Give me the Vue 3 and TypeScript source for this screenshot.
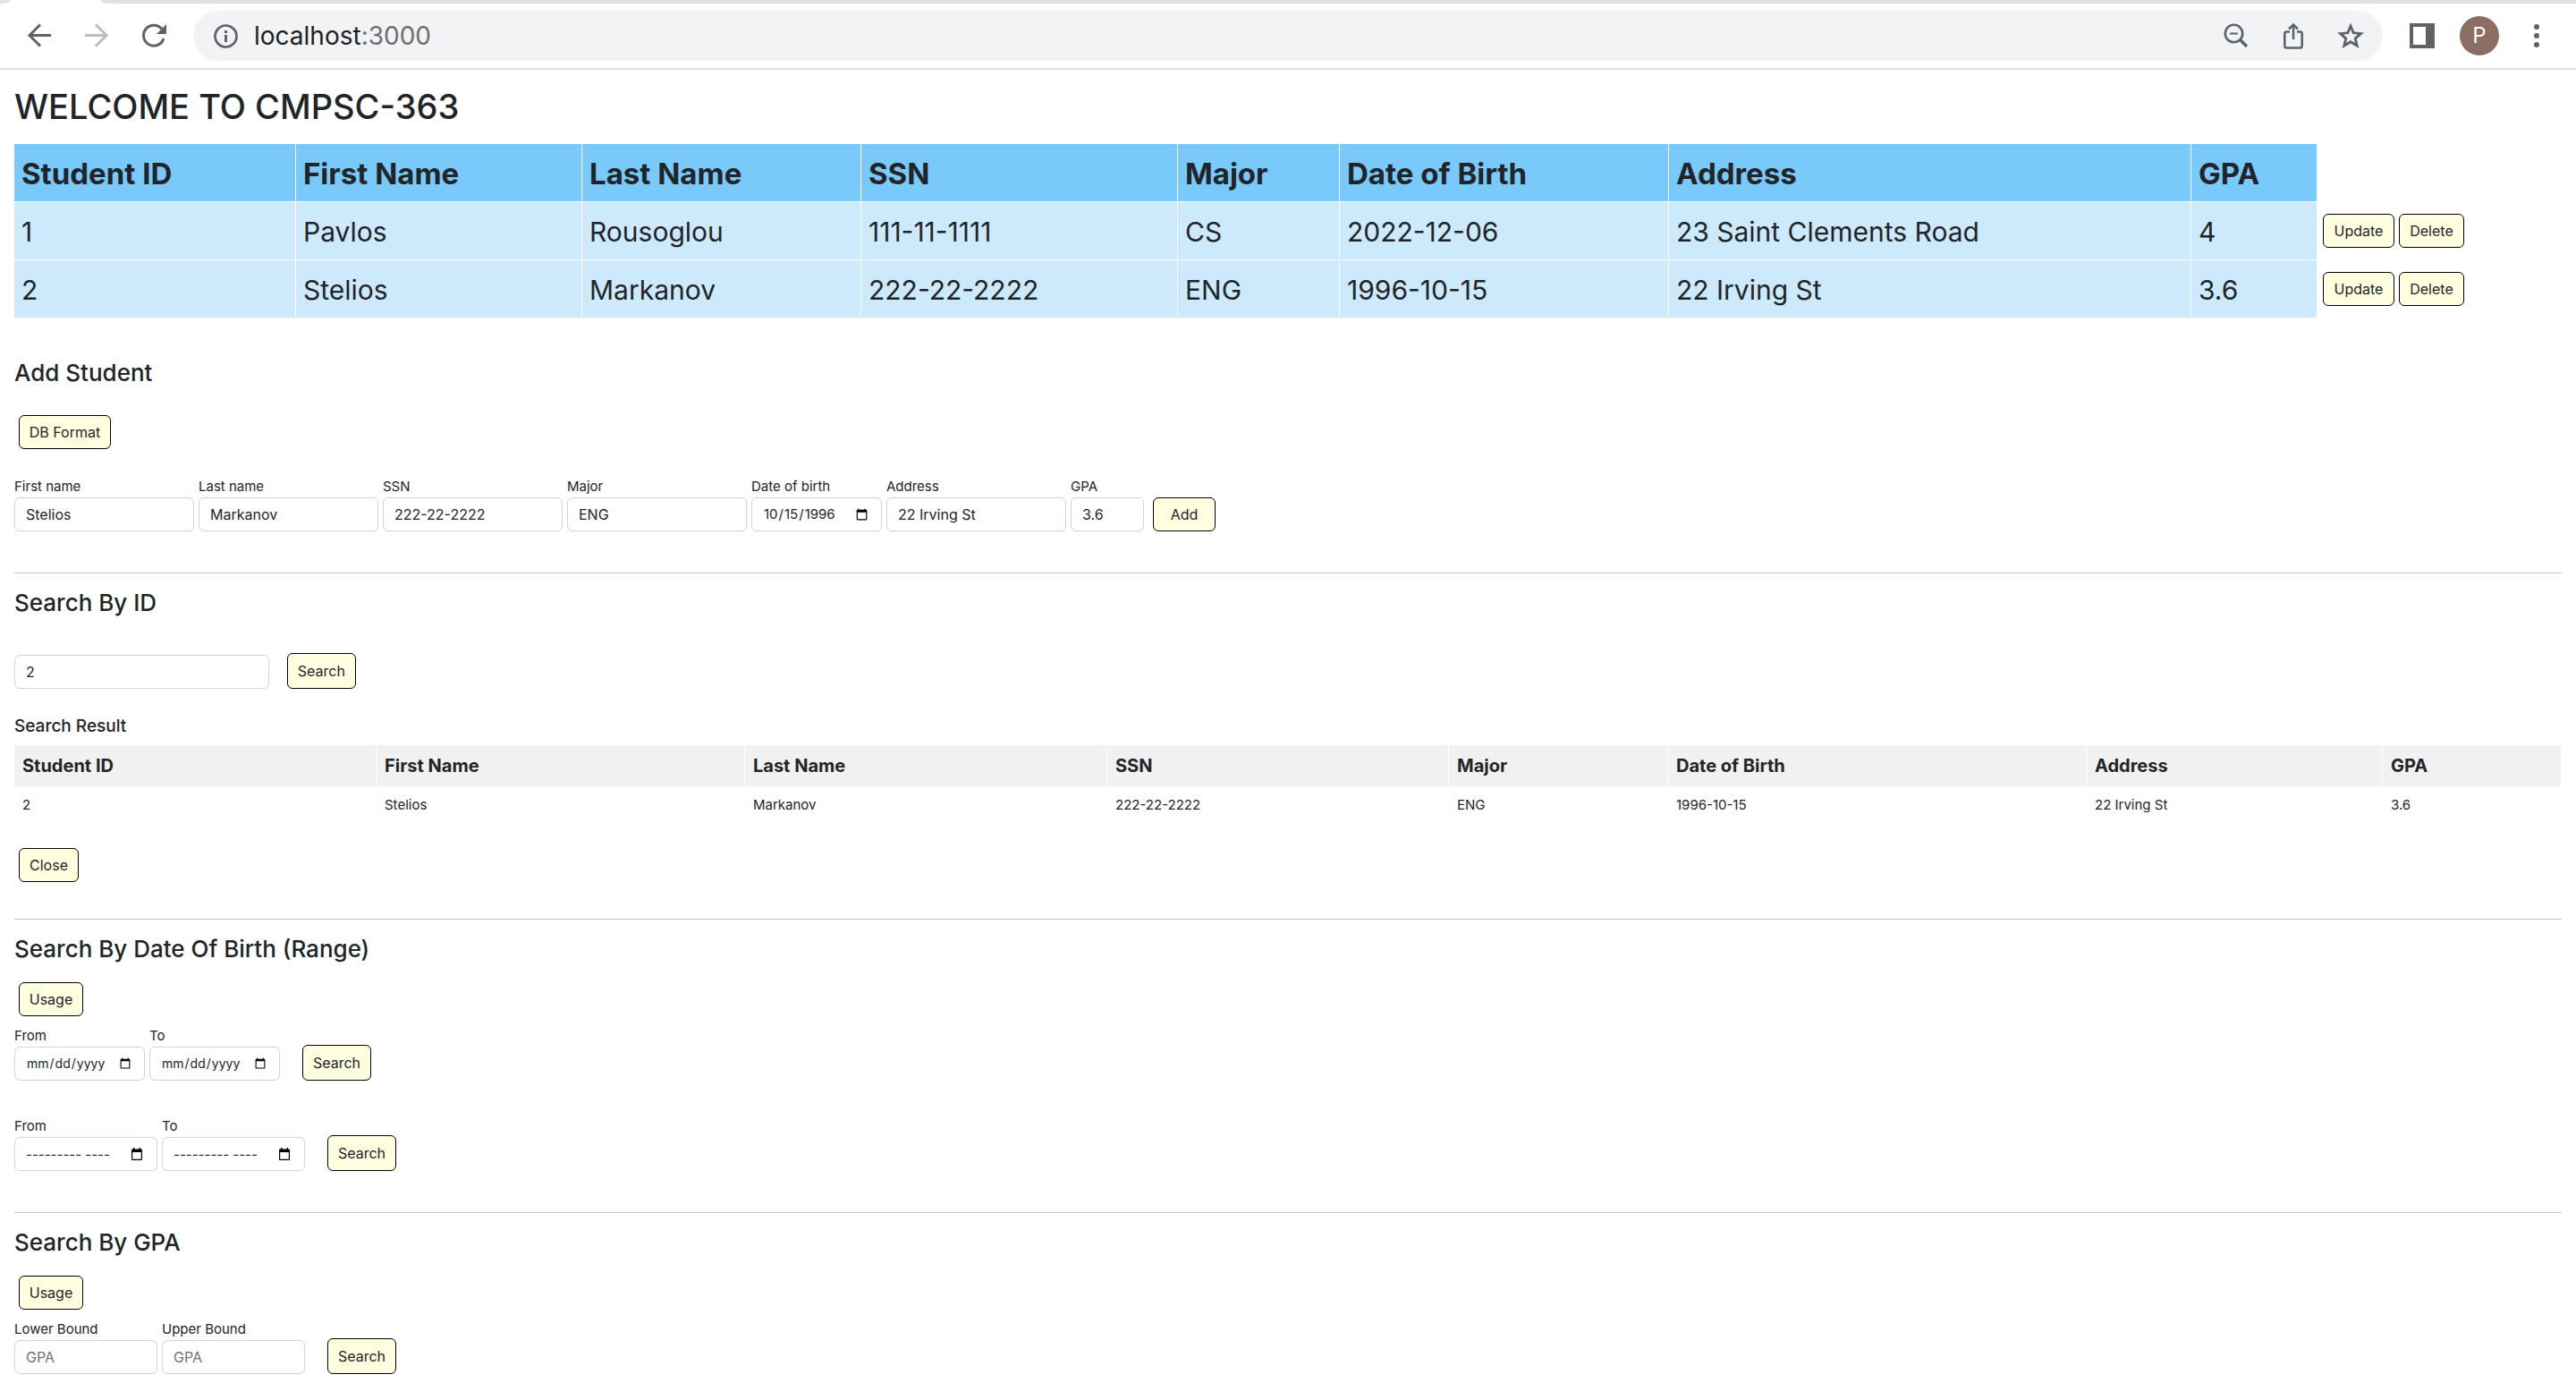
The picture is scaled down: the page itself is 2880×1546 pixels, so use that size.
<script setup lang="ts">
import { ref } from 'vue'

interface Student {
  id: number
  firstName: string
  lastName: string
  ssn: string
  major: string
  dob: string
  address: string
  gpa: number
}

interface Column {
  key: keyof Student
  title: string
  rosterShare: number
  resultShare: number
}

const columns: Column[] = [
  { key: 'id', title: 'Student ID', rosterShare: 315, resultShare: 405 },
  { key: 'firstName', title: 'First Name', rosterShare: 320, resultShare: 412 },
  { key: 'lastName', title: 'Last Name', rosterShare: 312, resultShare: 405 },
  { key: 'ssn', title: 'SSN', rosterShare: 354, resultShare: 382 },
  { key: 'major', title: 'Major', rosterShare: 181, resultShare: 245 },
  { key: 'dob', title: 'Date of Birth', rosterShare: 368, resultShare: 468 },
  { key: 'address', title: 'Address', rosterShare: 584, resultShare: 331 },
  { key: 'gpa', title: 'GPA', rosterShare: 141, resultShare: 200 },
]
const actionsShare = 273

const rosterTotal = columns.reduce((sum, c) => sum + c.rosterShare, actionsShare)
const resultTotal = columns.reduce((sum, c) => sum + c.resultShare, 0)
const percent = (share: number, total: number): string => `${(share / total) * 100}%`

const students = ref<Student[]>([
  { id: 1, firstName: 'Pavlos', lastName: 'Rousoglou', ssn: '111-11-1111', major: 'CS', dob: '2022-12-06', address: '23 Saint Clements Road', gpa: 4 },
  { id: 2, firstName: 'Stelios', lastName: 'Markanov', ssn: '222-22-2222', major: 'ENG', dob: '1996-10-15', address: '22 Irving St', gpa: 3.6 },
])

const form = ref({
  firstName: 'Stelios',
  lastName: 'Markanov',
  ssn: '222-22-2222',
  major: 'ENG',
  dob: '1996-10-15',
  address: '22 Irving St',
  gpa: '3.6',
})

const searchId = ref('2')
const result = ref<Student | null>(students.value[1])
const dobFrom = ref('')
const dobTo = ref('')
const months = ref([
  { id: 'month-from', label: 'From', value: '' },
  { id: 'month-to', label: 'To', value: '' },
])
const gpaLow = ref('')
const gpaHigh = ref('')

function addStudent(): void {
  const nextId = Math.max(0, ...students.value.map((s) => s.id)) + 1
  students.value.push({ id: nextId, ...form.value, gpa: Number(form.value.gpa) })
}

function removeStudent(id: number): void {
  students.value = students.value.filter((s) => s.id !== id)
}

function findById(): void {
  result.value = students.value.find((s) => s.id === Number(searchId.value)) ?? null
}
</script>

<template>
  <div class="window">
    <div class="tabstrip">
      <span class="strip-left"></span>
      <span class="strip-right"></span>
    </div>

    <header class="toolbar">
      <nav class="nav">
        <button class="icon-btn" type="button" aria-label="Back">
          <svg width="32" height="32" viewBox="0 0 32 32" fill="none" stroke="#5f6368" stroke-width="3">
            <path d="M29 15.500H5M17 3.500L5 15.500L17 27.500" />
          </svg>
        </button>
        <button class="icon-btn" type="button" aria-label="Forward">
          <svg width="32" height="32" viewBox="0 0 32 32" fill="none" stroke="#babcbe" stroke-width="3">
            <path d="M3 15.500H27M15 3.500L27 15.500L15 27.500" />
          </svg>
        </button>
        <button class="icon-btn" type="button" aria-label="Reload">
          <svg width="32" height="32" viewBox="0 0 32 32" fill="none">
            <path d="M27 19A11.500 11.500 0 1 1 25 8.500" stroke="#5f6368" stroke-width="3" />
            <path d="M30 3V14H19Z" fill="#5f6368" />
          </svg>
        </button>
      </nav>

      <div class="omnibox">
        <button class="icon-btn" type="button" aria-label="Site information">
          <svg width="32" height="32" viewBox="0 0 32 32" fill="none">
            <circle cx="16.500" cy="16.500" r="12" stroke="#5f6368" stroke-width="2.700" />
            <path d="M16.500 15V23M16.500 10V13" stroke="#5f6368" stroke-width="3" />
          </svg>
        </button>
        <span class="url">localhost<span class="port">:3000</span></span>
        <div class="omni-actions">
          <button class="icon-btn" type="button" aria-label="Zoom">
            <svg width="32" height="32" viewBox="0 0 32 32" fill="none" stroke="#5f6368">
              <circle cx="13.500" cy="13.500" r="9.700" stroke-width="2.600" />
              <path d="M9 13.500H18" stroke-width="2" />
              <path d="M20.500 20.500L28 28" stroke-width="3.600" />
            </svg>
          </button>
          <button class="icon-btn" type="button" aria-label="Share">
            <svg width="32" height="32" viewBox="0 0 32 32" fill="none" stroke="#5f6368" stroke-width="2.600">
              <path d="M12 11.500H8.500Q6.300 11.500 6.300 13.700V27.300Q6.300 29.500 8.500 29.500H23.500Q25.700 29.500 25.700 27.300V13.700Q25.700 11.500 23.500 11.500H20" />
              <path d="M16 20V4M11 8.500L16 3.500L21 8.500" />
            </svg>
          </button>
          <button class="icon-btn" type="button" aria-label="Bookmark">
            <svg width="32" height="32" viewBox="0 0 32 32" fill="#5f6368">
              <path fill-rule="evenodd" d="M16 1.500L20.200 11.500L31 12.400L22.800 19.500L25.300 30L16 24.400L6.700 30L9.200 19.500L1 12.400L11.800 11.500ZM16 8.800L13.800 14.100L8 14.600L12.400 18.400L11.100 24L16 21L20.900 24L19.600 18.400L24 14.600L18.200 14.100Z" />
            </svg>
          </button>
        </div>
      </div>

      <div class="chrome-actions">
        <button class="icon-btn" type="button" aria-label="Side panel">
          <svg width="28" height="28" viewBox="0 0 28 28">
            <path fill="#5f6368" fill-rule="evenodd" d="M0 0H28V28H0ZM4 4V24H18V4Z" />
          </svg>
        </button>
        <button class="avatar" type="button">P</button>
        <button class="icon-btn" type="button" aria-label="Menu">
          <svg width="28" height="28" viewBox="0 0 28 28" fill="#5f6368">
            <circle cx="14" cy="4" r="3" />
            <circle cx="14" cy="14" r="3" />
            <circle cx="14" cy="24" r="3" />
          </svg>
        </button>
      </div>
    </header>

    <main class="page">
      <h1>WELCOME TO CMPSC-363</h1>

      <table class="roster">
        <colgroup>
          <col v-for="c in columns" :key="c.key" :style="{ width: percent(c.rosterShare, rosterTotal) }" />
          <col :style="{ width: percent(actionsShare, rosterTotal) }" />
        </colgroup>
        <thead>
          <tr>
            <th v-for="c in columns" :key="c.key" scope="col">{{ c.title }}</th>
            <td class="actions"></td>
          </tr>
        </thead>
        <tbody>
          <tr v-for="s in students" :key="s.id">
            <td v-for="c in columns" :key="c.key">{{ s[c.key] }}</td>
            <td class="actions">
              <div class="action-row">
                <button class="btn update" type="button">Update</button>
                <button class="btn delete" type="button" @click="removeStudent(s.id)">Delete</button>
              </div>
            </td>
          </tr>
        </tbody>
      </table>

      <section class="add">
        <h2>Add Student</h2>
        <button class="btn inset format" type="button">DB Format</button>
        <form class="fields" @submit.prevent="addStudent">
          <div class="field text"><label for="first">First name</label><input id="first" v-model="form.firstName" type="text" /></div>
          <div class="field text"><label for="last">Last name</label><input id="last" v-model="form.lastName" type="text" /></div>
          <div class="field text"><label for="ssn">SSN</label><input id="ssn" v-model="form.ssn" type="text" /></div>
          <div class="field text"><label for="major">Major</label><input id="major" v-model="form.major" type="text" /></div>
          <div class="field date"><label for="dob">Date of birth</label><input id="dob" v-model="form.dob" type="date" /></div>
          <div class="field text"><label for="address">Address</label><input id="address" v-model="form.address" type="text" /></div>
          <div class="field grade"><label for="gpa">GPA</label><input id="gpa" v-model="form.gpa" type="text" /></div>
          <button class="btn submit" type="submit">Add</button>
        </form>
      </section>

      <hr />

      <section class="by-id">
        <h2>Search By ID</h2>
        <form class="fields" @submit.prevent="findById">
          <div class="field id"><input v-model="searchId" type="text" aria-label="Student ID" /></div>
          <button class="btn search near" type="submit">Search</button>
        </form>
        <template v-if="result">
          <h3>Search Result</h3>
          <table class="result">
            <colgroup>
              <col v-for="c in columns" :key="c.key" :style="{ width: percent(c.resultShare, resultTotal) }" />
            </colgroup>
            <thead>
              <tr>
                <th v-for="c in columns" :key="c.key" scope="col">{{ c.title }}</th>
              </tr>
            </thead>
            <tbody>
              <tr>
                <td v-for="c in columns" :key="c.key">{{ result[c.key] }}</td>
              </tr>
            </tbody>
          </table>
          <button class="btn inset close" type="button" @click="result = null">Close</button>
        </template>
      </section>

      <hr />

      <section class="range">
        <h2>Search By Date Of Birth (Range)</h2>
        <button class="btn inset usage" type="button">Usage</button>
        <form class="fields" @submit.prevent>
          <div class="field date"><label for="dob-from">From</label><input id="dob-from" v-model="dobFrom" type="date" /></div>
          <div class="field date"><label for="dob-to">To</label><input id="dob-to" v-model="dobTo" type="date" /></div>
          <button class="btn search" type="submit">Search</button>
        </form>
        <form class="fields months" @submit.prevent>
          <div v-for="m in months" :key="m.id" class="field wide month">
            <label :for="m.id">{{ m.label }}</label>
            <input :id="m.id" v-model="m.value" type="text" placeholder="--------- ----" />
            <button class="icon-btn picker" type="button" aria-label="Pick a month">
              <svg width="12" height="14" viewBox="0 0 12 14">
                <path fill="#000" fill-rule="evenodd" d="M2 0H3.500V1.500H8.500V0H10V1.500H11Q12 1.500 12 2.500V13Q12 14 11 14H1Q0 14 0 13V2.500Q0 1.500 1 1.500H2ZM1.200 5V12.800H10.800V5Z" />
              </svg>
            </button>
          </div>
          <button class="btn search" type="submit">Search</button>
        </form>
      </section>

      <hr />

      <section class="range">
        <h2>Search By GPA</h2>
        <button class="btn inset usage" type="button">Usage</button>
        <form class="fields" @submit.prevent>
          <div class="field wide"><label for="gpa-low">Lower Bound</label><input id="gpa-low" v-model="gpaLow" type="text" placeholder="GPA" /></div>
          <div class="field wide"><label for="gpa-high">Upper Bound</label><input id="gpa-high" v-model="gpaHigh" type="text" placeholder="GPA" /></div>
          <button class="btn search" type="submit">Search</button>
        </form>
      </section>
    </main>
  </div>
</template>

<style>
body {
  margin: 0;
  background: #fff;
}
</style>

<style scoped>
.window {
  font-family: Inter, "Liberation Sans", sans-serif;
  font-size: 16px;
  line-height: 24px;
  color: #212529;
  background: #fff;
}

.window *,
.window *::before,
.window *::after {
  box-sizing: border-box;
}

button,
input {
  font: inherit;
  color: inherit;
}

/* Browser chrome */
.tabstrip {
  display: flex;
  gap: 100px;
  height: 4px;
}

.strip-left {
  width: 12px;
  background: #dee1e6;
  border-bottom-right-radius: 12px 4px;
}

.strip-right {
  flex: 1;
  background: #dee1e6;
  border-bottom-left-radius: 12px 4px;
}

.toolbar {
  display: flex;
  align-items: center;
  height: 74px;
  padding: 0 30px 0 28px;
  border-bottom: 2px solid #dadce0;
}

.nav {
  display: flex;
  gap: 32px;
}

.icon-btn {
  display: flex;
  padding: 0;
  border: 0;
  background: none;
}

.omnibox {
  flex: 1;
  display: flex;
  align-items: center;
  height: 56px;
  margin: 0 30px 0 28px;
  padding: 0 20px;
  border-radius: 28px;
  background: #f1f3f4;
}

.url {
  flex: 1;
  margin-left: 16px;
  font-size: 28px;
  line-height: 32px;
  color: #202124;
}

.port {
  color: #6b6e72;
}

.omni-actions {
  display: flex;
  gap: 32px;
}

.chrome-actions {
  display: flex;
  align-items: center;
  gap: 28px;
}

.avatar {
  width: 44px;
  height: 44px;
  padding: 0;
  border: 0;
  border-radius: 50%;
  background: #8d6e63;
  color: #fff;
  font-size: 24px;
}

/* Page */
.page {
  padding: 17px 16px 10px;
}

h1,
h2,
h3 {
  margin: 0;
  font-weight: 500;
}

h1 {
  margin-bottom: 18px;
  font-size: 38px;
  line-height: 48px;
}

h2 {
  font-size: 26px;
  line-height: 34px;
}

h3 {
  margin: 30px 0 9px;
  font-size: 19px;
  line-height: 24px;
}

hr {
  height: 1px;
  margin: 46px 0 16px;
  border: 0;
  background: #c8c9ca;
}

table {
  width: 100%;
  table-layout: fixed;
  border-collapse: separate;
  border-spacing: 0;
  text-align: left;
}

th,
td {
  padding: 8px;
  border-right: 1px solid #fff;
  white-space: nowrap;
}

.roster th,
.roster td {
  height: 65px;
  padding: 9px 8px 7px;
  border-bottom: 1px solid #fff;
  font-size: 30px;
  line-height: 48px;
}

.roster th {
  background: #79c9fa;
  font-size: 33px;
}

.roster td {
  background: #cdeafc;
}

.roster .actions {
  padding: 0 6px;
  border: 0;
  background: none;
}

.action-row {
  display: flex;
  gap: 5px;
  font-size: 16px;
  line-height: 24px;
  padding-bottom: 2px;
}

.result th,
.result td {
  padding-left: 9px;
}

.result th {
  height: 47px;
  background: #f1f1f1;
  border-bottom: 1px solid #fff;
  font-size: 20px;
  line-height: 24px;
}

.result td {
  height: 40px;
  font-size: 15px;
  line-height: 24px;
}

.btn {
  height: 38px;
  padding: 0;
  border: 1px solid #000;
  border-radius: 6px;
  background: #ffffe0;
  font-size: 16px;
  line-height: 24px;
}

.inset {
  display: block;
  margin-left: 5px;
}

.update {
  width: 80px;
}

.delete {
  width: 73px;
}

.format {
  width: 103px;
}

.usage {
  width: 72px;
}

.close {
  width: 67px;
  margin-top: 28px;
}

.submit {
  width: 70px;
  margin-left: 5px;
}

.search {
  width: 77px;
  height: 40px;
  margin-left: 20px;
}

.near {
  margin-left: 15px;
}

.fields {
  display: flex;
  align-items: flex-end;
  gap: 5px;
}

.field {
  display: flex;
  flex-direction: column;
}

.field label {
  font-size: 15px;
}

.field input {
  width: 100%;
  height: 38px;
  margin: 0;
  padding: 6px 12px;
  border: 1px solid #ced4da;
  border-radius: 6px;
  background: #fff;
  line-height: 24px;
}

.field input::placeholder {
  color: #6c757d;
  opacity: 1;
}

.text {
  width: 201px;
}

.date {
  width: 146px;
}

.date input {
  font-size: 15px;
}

.range .date input {
  font-size: 14px;
}

.wide {
  width: 160px;
}

.month {
  position: relative;
}

.month input {
  font-size: 15px;
}

.month input::placeholder {
  color: #212529;
}

.picker {
  position: absolute;
  right: 17px;
  bottom: 12px;
}

.grade {
  width: 82px;
}

.id {
  width: 10%;
}

.add {
  padding-top: 44px;
}

.format {
  margin-top: 30px;
  margin-bottom: 30px;
}

.by-id .fields {
  margin-top: 39px;
}

.by-id + hr {
  margin-top: 41px;
}

.usage {
  margin-top: 20px;
  margin-bottom: 10px;
}

.months {
  margin-top: 39px;
}
</style>
